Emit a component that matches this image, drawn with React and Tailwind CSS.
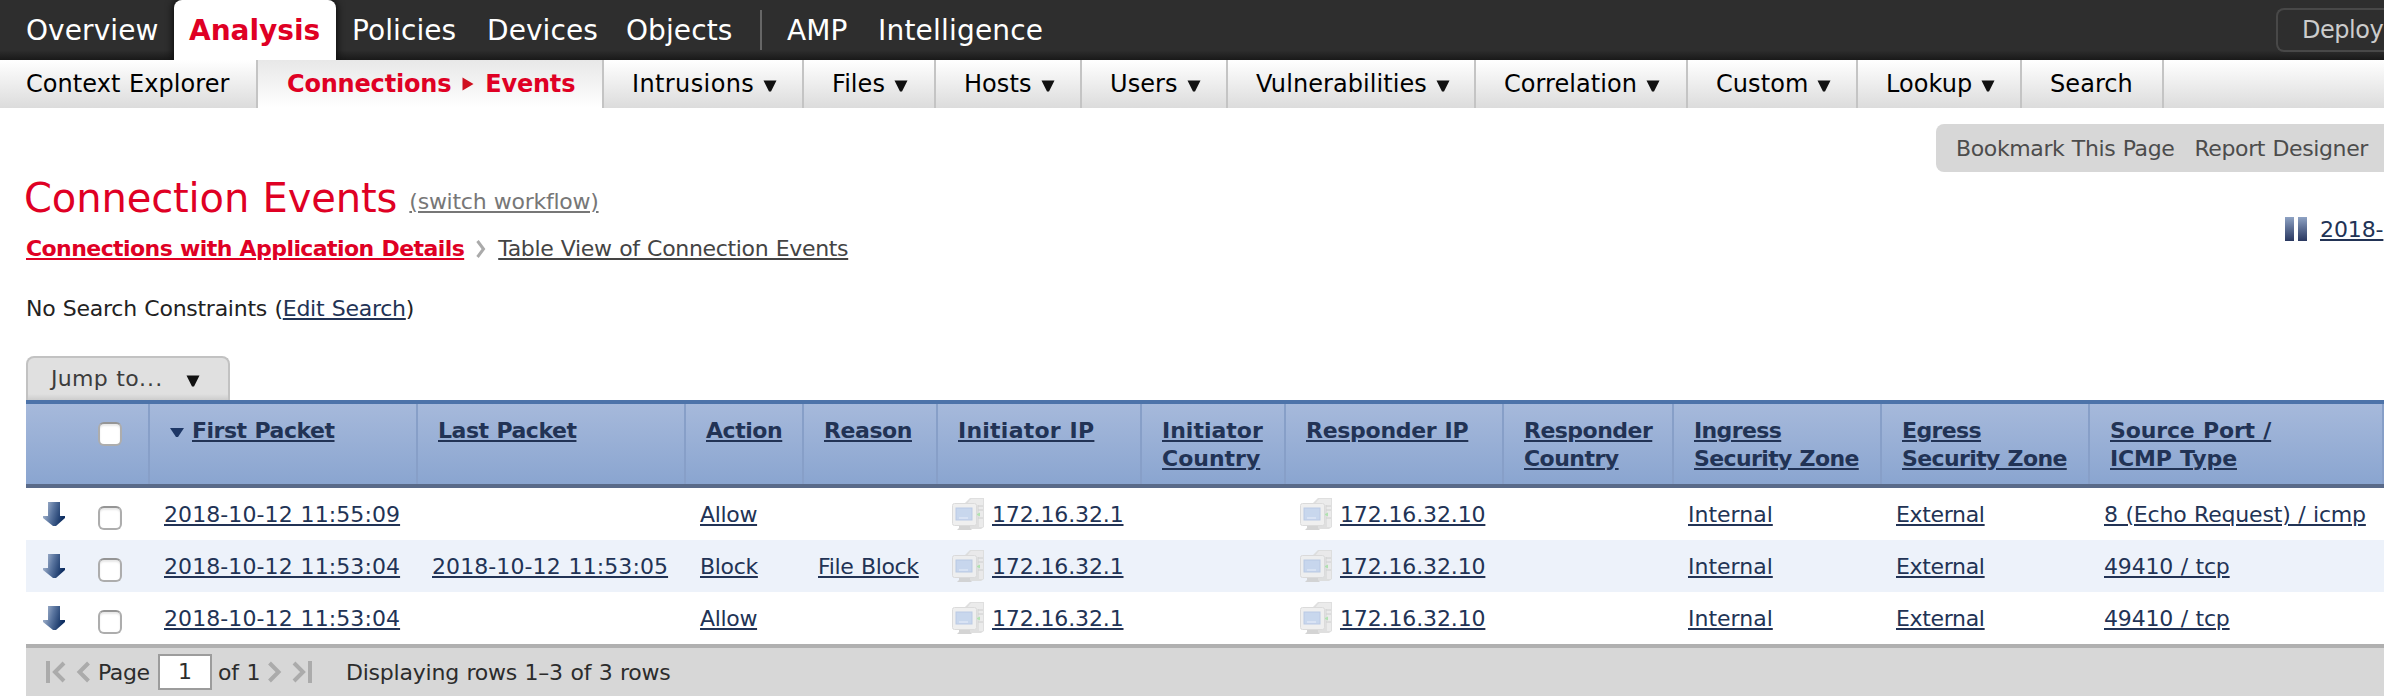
import clsx from 'clsx';

const mainNav = [
  { label: 'Overview', className: 'w-[174px] pl-[26px]' },
  { label: 'Analysis', className: 'w-[162px] pl-[15px] bg-white text-[#df0024] font-bold rounded-t-lg shadow-[0_0_8px_#000] tracking-[0em]' },
  { label: 'Policies', className: 'w-[135px] pl-4' },
  { label: 'Devices', className: 'w-[139px] pl-4' },
  { label: 'Objects', className: 'w-[150px] pl-4' },
];

const subNav = [
  { label: 'Intrusions', className: 'w-[200px] tracking-[0.016em]', menu: true },
  { label: 'Files', className: 'w-[132px]', menu: true },
  { label: 'Hosts', className: 'w-[146px]', menu: true },
  { label: 'Users', className: 'w-[146px]', menu: true },
  { label: 'Vulnerabilities', className: 'w-[248px]', menu: true },
  { label: 'Correlation', className: 'w-[212px]', menu: true },
  { label: 'Custom', className: 'w-[170px]', menu: true },
  { label: 'Lookup', className: 'w-[164px]', menu: true },
  { label: 'Search', className: 'w-[142px]' },
];

const columns = [
  { lines: ['First Packet'], className: 'tracking-[-0.022em]', sorted: true },
  { lines: ['Last Packet'], className: 'tracking-[-0.022em]' },
  { lines: ['Action'], className: 'tracking-[-0.02em]' },
  { lines: ['Reason'], className: 'tracking-[-0.02em]' },
  { lines: ['Initiator IP'], className: 'tracking-[0.011em]' },
  { lines: ['Initiator', 'Country'], className: 'tracking-[0em]' },
  { lines: ['Responder IP'], className: 'tracking-[-0.013em]' },
  { lines: ['Responder', 'Country'], className: 'tracking-[-0.024em]' },
  { lines: ['Ingress', 'Security Zone'], className: 'tracking-[-0.028em]' },
  { lines: ['Egress', 'Security Zone'], className: 'tracking-[-0.028em]' },
  { lines: ['Source Port /', 'ICMP Type'], className: 'tracking-[-0.006em]' },
];

const events = [
  { first: '2018-10-12 11:55:09', last: '', action: 'Allow', reason: '', port: '8 (Echo Request) / icmp' },
  { first: '2018-10-12 11:53:04', last: '2018-10-12 11:53:05', action: 'Block', reason: 'File Block', port: '49410 / tcp' },
  { first: '2018-10-12 11:53:04', last: '', action: 'Allow', reason: '', port: '49410 / tcp' },
];

const gridCols = 'grid grid-cols-[124px_268px_268px_118px_134px_204px_144px_218px_170px_208px_208px_294px]';

function Caret({ className }) {
  return (
    <svg className={clsx('shrink-0', className)} width="14" height="12" viewBox="0 0 14 12">
      <path d="M0.5 0.5h13L8 11.5H6z" fill="#111" />
    </svg>
  );
}

function ArrowDown() {
  return (
    <svg width="22" height="24" viewBox="0 0 22 24">
      <defs>
        <linearGradient id="arrowFill" x1="0" y1="0" x2="1" y2="0.3">
          <stop offset="0.1" stopColor="#a9b8d0" />
          <stop offset="0.5" stopColor="#5b76a0" />
          <stop offset="1" stopColor="#0f2f62" />
        </linearGradient>
      </defs>
      <path d="M5 0h12v14h5v2l-9 8h-3l-10-8v-2h5z" fill="url(#arrowFill)" />
    </svg>
  );
}

function HostIcon() {
  return (
    <svg className="shrink-0 opacity-90" width="32" height="32" viewBox="0 0 32 32">
      <path d="M11 7l7-7h14v29l-3 2H15z" fill="#dcdcdc" />
      <path d="M19 1h12v28h-4V7H14z" fill="#e9e9e9" />
      <path d="M26 8h5M26 12h5M26 20h5" stroke="#cacaca" strokeWidth="1" />
      <path d="M24 16.5l4-2v4z" fill="#a9dfa9" />
      <path d="M7 27h11v3l2 2H5l2-2z" fill="#d0d0d0" />
      <rect x="0.5" y="5.5" width="24" height="22" rx="2" fill="#eeeeee" stroke="#d8d8d8" />
      <rect x="4" y="10" width="16" height="12" fill="#c3d3ec" stroke="#b4c5e2" />
      <path d="M7 20h9" stroke="#dbe6f6" strokeWidth="1.5" />
    </svg>
  );
}

function PagerIcon({ d, width }) {
  return (
    <svg width={width} height="22" viewBox={`0 0 ${width} 22`} fill="none" stroke="#ababab" strokeWidth="4">
      <path d={d} />
    </svg>
  );
}

function Checkbox() {
  return <span className="block w-6 h-6 rounded-md border-2 border-[#adadad] border-t-[#959595] bg-white shadow-[inset_0_2px_2px_#e8e8e8]" />;
}

function CellLink({ children, className = 'tracking-[-0.015em]' }) {
  if (!children) return <div />;
  return (
    <div className="pl-[14px] pt-[13px]">
      <a className={clsx('underline decoration-2 underline-offset-2', className)}>{children}</a>
    </div>
  );
}

function HostCell({ ip }) {
  return (
    <div className="pl-[14px] flex">
      <span className="pt-[10px]"><HostIcon /></span>
      <a className="ml-2 pt-[13px] underline decoration-2 underline-offset-2 tracking-[-0.006em]">{ip}</a>
    </div>
  );
}

function TopNav() {
  return (
    <nav className="h-[60px] flex overflow-hidden text-white text-[28px] leading-[61px] tracking-[0.003em] bg-[linear-gradient(#2e2e2e_0,#2e2e2e_50px,#191919_60px)]">
      {mainNav.map(item => (
        <a key={item.label} className={clsx('shrink-0', item.className)}>{item.label}</a>
      ))}
      <span className="w-0.5 h-10 mt-[10px] bg-[#666]" />
      <a className="w-[93px] pl-[25px]">AMP</a>
      <a className="pl-[23px] tracking-[0.007em]">Intelligence</a>
      <a className="ml-auto mt-2 w-[108px] h-11 shrink-0 border-2 border-r-0 border-[#484848] rounded-l-lg pl-6 text-2xl leading-10 tracking-[-0.02em] text-[#ccc]">Deploy</a>
    </nav>
  );
}

function SubNav() {
  return (
    <nav className="h-12 flex text-2xl leading-[48px] tracking-[0.003em] text-black bg-linear-to-b from-white to-[#dcdcdc]">
      <a className="w-[258px] pl-[26px] border-r-2 border-[#c4c4c4]">Context Explorer</a>
      <a className="w-[346px] pl-[29px] border-r-2 border-[#c4c4c4] flex items-center font-bold tracking-[-0.008em] text-[#df0024] bg-linear-to-b from-[#e8e8e8] to-white">
        Connections
        <svg className="mx-[11px] shrink-0" width="12" height="14" viewBox="0 0 12 14">
          <path d="M0.5 0.5L11.5 7l-11 6.5z" fill="#cf1020" />
        </svg>
        Events
      </a>
      {subNav.map(item => (
        <a key={item.label} className={clsx('pl-7 border-r-2 border-[#c4c4c4] flex', item.className)}>
          {item.label}
          {item.menu && <Caret className="ml-[9px] mt-5" />}
        </a>
      ))}
    </nav>
  );
}

function App() {
  return (
    <div className="w-[2384px] h-[696px] overflow-hidden bg-white text-[#222] text-[22px] leading-7 whitespace-nowrap tracking-[-0.005em] [word-spacing:0.034em] font-['DejaVu_Sans',Verdana,sans-serif]">
      <TopNav />
      <SubNav />

      <div className="flex justify-between h-[248px]">
        <div className="pl-[26px] pt-[66px]">
          <div className="flex items-start h-[60px]">
            <h1 className="text-[40px] leading-[48px] text-[#df0024] -ml-0.5">Connection Events</h1>
            <a className="ml-3 mt-[14px] text-[#777] tracking-[-0.012em] underline decoration-2 underline-offset-2">(switch workflow)</a>
          </div>
          <div className="flex items-center pt-px">
            <a className="font-bold text-[#df0024] underline decoration-2 underline-offset-2 tracking-[-0.026em]">Connections with Application Details</a>
            <svg className="mx-3" width="10" height="18" viewBox="0 0 10 18" fill="none" stroke="#aaa" strokeWidth="3">
              <path d="M1.5 1l6 8-6 8" />
            </svg>
            <a className="text-[#444] underline decoration-2 underline-offset-2 tracking-[-0.015em]">Table View of Connection Events</a>
          </div>
          <p className="mt-8 tracking-[-0.012em]">
            No Search Constraints (<a className="text-[#223355] underline decoration-2 underline-offset-2">Edit Search</a>)
          </p>
        </div>

        <div className="w-[448px] shrink-0 pt-4">
          <div className="h-12 rounded-l-lg bg-[#d7d7d7] text-[#4c4c4c] leading-[49px] pl-5 flex gap-5 tracking-[-0.017em]">
            <a>Bookmark This Page</a>
            <a>Report Designer</a>
          </div>
          <div className="mt-[42px] pl-[349px] flex items-center overflow-hidden">
            <span className="w-[9px] h-6 bg-linear-to-b from-[#8fa3c4] to-[#2a3860]" />
            <span className="w-[9px] h-6 ml-1 bg-linear-to-b from-[#8fa3c4] to-[#2a3860]" />
            <a className="ml-[13px] pt-0.5 text-[#223355] underline decoration-2 underline-offset-2">2018-</a>
          </div>
        </div>
      </div>

      <div className="ml-[26px]">
        <div className="w-[204px] h-11 border-2 border-b-0 border-[#c2c2c2] rounded-t-lg bg-[linear-gradient(#e0e0e0_0,#e0e0e0_36px,#cdcdcd_42px)] text-[#3c3c3c] pl-[23px] pt-[7px] flex">
          <span className="w-[113px] tracking-[0.015em]">Jump to<span className="tracking-[0.05em]">...</span></span>
          <Caret className="ml-[22px] mt-[10px]" />
        </div>

        <div className={clsx(gridCols, 'h-[88px] border-y-4 border-t-[#4d73a9] border-b-[#596a89] bg-linear-to-b from-[#a6b9db] to-[#8aa5d0] text-[#223355] font-bold')}>
          <div className="border-r-2 border-[#879fc8] pl-[72px] pt-[18px]"><Checkbox /></div>
          {columns.map(col => (
            <div key={col.lines.join(' ')} className={clsx('border-r-2 border-[#879fc8] pl-5 pt-[13px] flex', col.className)}>
              {col.sorted && (
                <svg className="mr-2 mt-[11px]" width="14" height="9" viewBox="0 0 14 9">
                  <path d="M0 0h14L8 9H6z" fill="#1e3766" />
                </svg>
              )}
              <a>
                {col.lines.map(line => (
                  <span key={line} className="block underline decoration-2 underline-offset-2">{line}</span>
                ))}
              </a>
            </div>
          ))}
        </div>

        {events.map((event, i) => (
          <div key={i} className={clsx(gridCols, 'h-[52px] text-[#223355]', i % 2 === 1 && 'bg-[#edf2fa]')}>
            <div className="flex">
              <span className="ml-[17px] mt-[14px]"><ArrowDown /></span>
              <span className="ml-[33px] mt-[18px]"><Checkbox /></span>
            </div>
            <CellLink className="tracking-[0.004em]">{event.first}</CellLink>
            <CellLink className="tracking-[0.004em]">{event.last}</CellLink>
            <CellLink>{event.action}</CellLink>
            <CellLink>{event.reason}</CellLink>
            <HostCell ip="172.16.32.1" />
            <div />
            <HostCell ip="172.16.32.10" />
            <div />
            <CellLink className="tracking-[0em]">Internal</CellLink>
            <CellLink>External</CellLink>
            <CellLink className="tracking-[-0.008em]">{event.port}</CellLink>
          </div>
        ))}

        <div className="h-[52px] border-t-4 border-[#b0b0b0] bg-[#d7d7d7] leading-[49px] flex items-center text-[#2c2c2c]">
          <span className="ml-5"><PagerIcon width={20} d="M2 0v22M18 2l-9 9 9 9" /></span>
          <span className="ml-[10px]"><PagerIcon width={14} d="M12.5 2l-9 9 9 9" /></span>
          <span className="ml-2 w-[60px] tracking-[-0.02em]">Page</span>
          <span className="w-[54px] h-9 border-2 border-[#9c9c9c] bg-white text-center leading-8">1</span>
          <span className="ml-1.5 w-[50px]">of 1</span>
          <PagerIcon width={14} d="M1.5 2l9 9-9 9" />
          <span className="ml-[10px]"><PagerIcon width={20} d="M18 0v22M2 2l9 9-9 9" /></span>
          <span className="ml-[34px] tracking-[-0.01em]">Displaying rows 1–3 of 3 rows</span>
        </div>
      </div>
    </div>
  );
}

export default App;
